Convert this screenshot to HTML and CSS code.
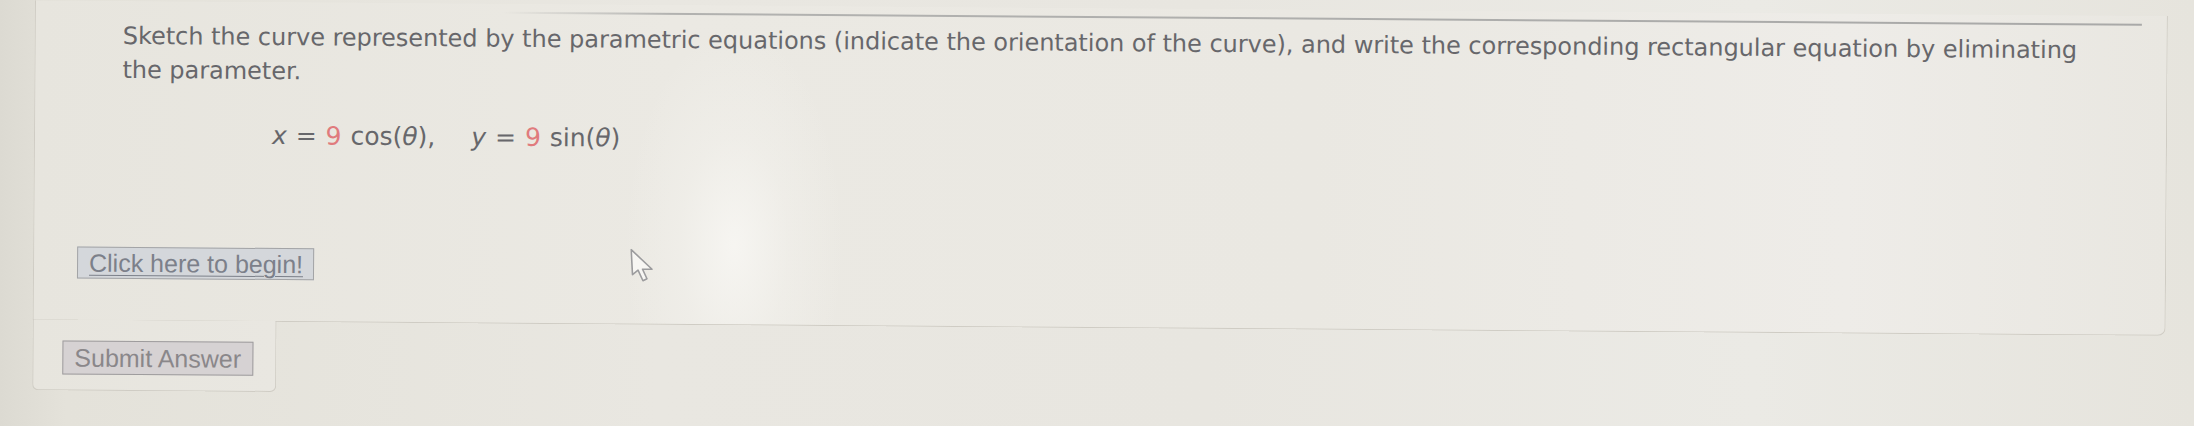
FILE: index.html
```
<!DOCTYPE html>
<html lang="en">
<head>
<meta charset="utf-8">
<title>Parametric curve question</title>
<link rel="stylesheet" href="styles.css">
</head>
<body>
<div class="page">
  <div class="card">
    <div class="topline"></div>
    <p class="question">Sketch the curve represented by the parametric equations (indicate the orientation of the curve), and write the corresponding rectangular equation by eliminating the parameter.</p>
    <p class="equation"><i>x</i> = <span class="num">9</span> cos(<i>θ</i>),<span class="gap"></span><i>y</i> = <span class="num">9</span> sin(<i>θ</i>)</p>
    <a class="begin" href="#">Click here to begin!</a>
    <svg class="cursor" width="24" height="34" viewBox="-1 -1 24 34" aria-hidden="true">
      <path d="M0 0 L1.5 25 L7 20.5 L12 31 L16 29 L11.5 19.5 L21 19.5 Z" fill="#f7f6f3" stroke="#9c9c9e" stroke-width="1.6" stroke-linejoin="round"/>
    </svg>
  </div>
  <div class="tab">
    <button class="submit" type="button">Submit Answer</button>
  </div>
</div>
</body>
</html>
```
FILE: styles.css
```
html, body {
  margin: 0;
  padding: 0;
}
body {
  width: 2194px;
  height: 426px;
  overflow: hidden;
  background: linear-gradient(to right, #dcdad2 0, #e4e2da 3%, #e9e7e1 30%, #e8e6e0 55%, #ebeae5 80%, #e6e4dd 100%);
  font-family: "DejaVu Sans", Verdana, sans-serif;
}
.page {
  transform: rotate(0.42deg);
  transform-origin: 0 0;
}
.card {
  position: relative;
  margin-left: 35px;
  width: 2131px;
  border: 1px solid #cfccc4;
  border-top: none;
  border-radius: 0 0 8px 0;
  background:
    radial-gradient(ellipse 110px 220px at 700px 240px, rgba(250,249,246,0.75) 0, rgba(246,245,241,0.35) 50%, rgba(240,239,234,0) 100%),
    linear-gradient(to right, #e7e5de 0, #ebe9e3 30%, #eae8e2 60%, #eeece8 85%, #e9e7e1 100%);
  padding-bottom: 41px;
}
.topline {
  margin-left: 4px;
  width: 2102px;
  height: 2px;
  position: relative;
  top: 8px;
  background: linear-gradient(to right, rgba(170,170,170,0) 0, rgba(170,170,170,0) 22%, #b2b2b0 30%, #a9a9a8 100%);
}
.question {
  margin: 16px 0 0 0;
  padding: 0 64px 0 87px;
  font-size: 24px;
  line-height: 34px;
  letter-spacing: -0.03px;
  color: #67676b;
}
.equation {
  margin: 30px 0 0 0;
  padding-left: 237px;
  font-size: 25px;
  line-height: 35px;
  color: #67676b;
  word-spacing: 1px;
}
.equation i {
  font-style: italic;
}
.num {
  color: #e07b7d;
}
.gap {
  display: inline-block;
  width: 36px;
}
.begin {
  display: inline-block;
  margin: 95px 0 0 43px;
  padding: 0 10px 0 11px;
  border: 1px solid #a3a4a6;
  background: #d4d7db;
  color: #7c808a;
  font-family: "Liberation Sans", Arial, sans-serif;
  font-size: 25px;
  line-height: 30px;
  text-decoration: underline;
  text-decoration-thickness: 1px;
  text-underline-offset: 3px;
}
.cursor {
  position: absolute;
  left: 596px;
  top: 244px;
}
.tab {
  position: relative;
  margin-left: 35px;
  margin-top: -1px;
  width: 244px;
  border: 1px solid #cfccc4;
  border-top: none;
  border-radius: 0 0 6px 6px;
  background: linear-gradient(to right, #e7e5de 0, #e9e7e1 100%);
  padding: 21px 0 0 29px;
  box-sizing: border-box;
  height: 71px;
}
.submit {
  display: block;
  margin: 0;
  padding: 0 11px;
  height: 34px;
  border: 1px solid #9e9c9d;
  background: #d6d2d3;
  color: #8a878a;
  font-family: "Liberation Sans", Arial, sans-serif;
  font-size: 25px;
  line-height: 32px;
}
```
